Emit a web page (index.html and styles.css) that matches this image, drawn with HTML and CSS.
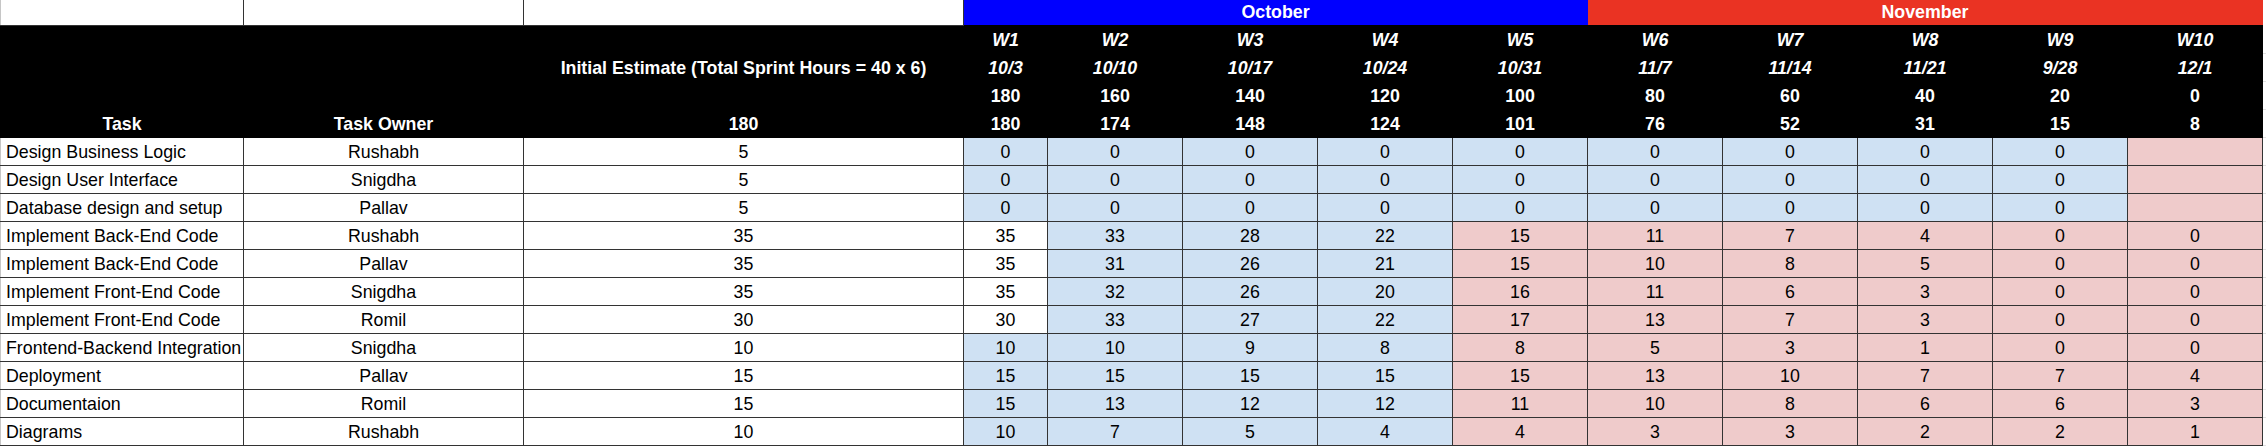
FILE: index.html
```html
<!DOCTYPE html>
<html lang="en">
<head>
<meta charset="utf-8">
<title>Sprint Burndown</title>
<link rel="stylesheet" href="styles.css">
</head>
<body>
<table class="sheet">
  <colgroup>
    <col class="c-task">
    <col class="c-owner">
    <col class="c-est">
    <col class="c-w1">
    <col class="c-w"><col class="c-w"><col class="c-w"><col class="c-w"><col class="c-w">
    <col class="c-w"><col class="c-w"><col class="c-w"><col class="c-w">
    <col class="c-pad">
  </colgroup>
  <tbody>
    <tr class="month-row">
      <td></td><td></td><td></td>
      <td colspan="5" class="month oct">October</td>
      <td colspan="5" class="month nov">November</td>
      <td class="pad"></td>
    </tr>
    <tr class="hdr">
      <td></td><td></td><td></td>
      <td class="it">W1</td><td class="it">W2</td><td class="it">W3</td><td class="it">W4</td><td class="it">W5</td>
      <td class="it">W6</td><td class="it">W7</td><td class="it">W8</td><td class="it">W9</td><td class="it">W10</td>
      <td class="pad"></td>
    </tr>
    <tr class="hdr">
      <td></td><td></td><td>Initial Estimate (Total Sprint Hours = 40 x 6)</td>
      <td class="it">10/3</td><td class="it">10/10</td><td class="it">10/17</td><td class="it">10/24</td><td class="it">10/31</td>
      <td class="it">11/7</td><td class="it">11/14</td><td class="it">11/21</td><td class="it">9/28</td><td class="it">12/1</td>
      <td class="pad"></td>
    </tr>
    <tr class="hdr">
      <td></td><td></td><td></td>
      <td>180</td><td>160</td><td>140</td><td>120</td><td>100</td>
      <td>80</td><td>60</td><td>40</td><td>20</td><td>0</td>
      <td class="pad"></td>
    </tr>
    <tr class="hdr last">
      <td>Task</td><td>Task Owner</td><td>180</td>
      <td>180</td><td>174</td><td>148</td><td>124</td><td>101</td>
      <td>76</td><td>52</td><td>31</td><td>15</td><td>8</td>
      <td class="pad"></td>
    </tr>

    <tr class="data">
      <td class="task">Design Business Logic</td><td>Rushabh</td><td>5</td>
      <td class="b">0</td><td class="b">0</td><td class="b">0</td><td class="b">0</td><td class="b">0</td>
      <td class="b">0</td><td class="b">0</td><td class="b">0</td><td class="b">0</td><td class="r"></td>
      <td class="pad"></td>
    </tr>
    <tr class="data">
      <td class="task">Design User Interface</td><td>Snigdha</td><td>5</td>
      <td class="b">0</td><td class="b">0</td><td class="b">0</td><td class="b">0</td><td class="b">0</td>
      <td class="b">0</td><td class="b">0</td><td class="b">0</td><td class="b">0</td><td class="r"></td>
      <td class="pad"></td>
    </tr>
    <tr class="data">
      <td class="task">Database design and setup</td><td>Pallav</td><td>5</td>
      <td class="b">0</td><td class="b">0</td><td class="b">0</td><td class="b">0</td><td class="b">0</td>
      <td class="b">0</td><td class="b">0</td><td class="b">0</td><td class="b">0</td><td class="r"></td>
      <td class="pad"></td>
    </tr>
    <tr class="data">
      <td class="task">Implement Back-End Code</td><td>Rushabh</td><td>35</td>
      <td>35</td><td class="b">33</td><td class="b">28</td><td class="b">22</td><td class="r">15</td>
      <td class="r">11</td><td class="r">7</td><td class="r">4</td><td class="r">0</td><td class="r">0</td>
      <td class="pad"></td>
    </tr>
    <tr class="data">
      <td class="task">Implement Back-End Code</td><td>Pallav</td><td>35</td>
      <td>35</td><td class="b">31</td><td class="b">26</td><td class="b">21</td><td class="r">15</td>
      <td class="r">10</td><td class="r">8</td><td class="r">5</td><td class="r">0</td><td class="r">0</td>
      <td class="pad"></td>
    </tr>
    <tr class="data">
      <td class="task">Implement Front-End Code</td><td>Snigdha</td><td>35</td>
      <td>35</td><td class="b">32</td><td class="b">26</td><td class="b">20</td><td class="r">16</td>
      <td class="r">11</td><td class="r">6</td><td class="r">3</td><td class="r">0</td><td class="r">0</td>
      <td class="pad"></td>
    </tr>
    <tr class="data">
      <td class="task">Implement Front-End Code</td><td>Romil</td><td>30</td>
      <td>30</td><td class="b">33</td><td class="b">27</td><td class="b">22</td><td class="r">17</td>
      <td class="r">13</td><td class="r">7</td><td class="r">3</td><td class="r">0</td><td class="r">0</td>
      <td class="pad"></td>
    </tr>
    <tr class="data">
      <td class="task">Frontend-Backend Integration</td><td>Snigdha</td><td>10</td>
      <td class="b">10</td><td class="b">10</td><td class="b">9</td><td class="b">8</td><td class="r">8</td>
      <td class="r">5</td><td class="r">3</td><td class="r">1</td><td class="r">0</td><td class="r">0</td>
      <td class="pad"></td>
    </tr>
    <tr class="data">
      <td class="task">Deployment</td><td>Pallav</td><td>15</td>
      <td class="b">15</td><td class="b">15</td><td class="b">15</td><td class="b">15</td><td class="r">15</td>
      <td class="r">13</td><td class="r">10</td><td class="r">7</td><td class="r">7</td><td class="r">4</td>
      <td class="pad"></td>
    </tr>
    <tr class="data">
      <td class="task">Documentaion</td><td>Romil</td><td>15</td>
      <td class="b">15</td><td class="b">13</td><td class="b">12</td><td class="b">12</td><td class="r">11</td>
      <td class="r">10</td><td class="r">8</td><td class="r">6</td><td class="r">6</td><td class="r">3</td>
      <td class="pad"></td>
    </tr>
    <tr class="data">
      <td class="task">Diagrams</td><td>Rushabh</td><td>10</td>
      <td class="b">10</td><td class="b">7</td><td class="b">5</td><td class="b">4</td><td class="r">4</td>
      <td class="r">3</td><td class="r">3</td><td class="r">2</td><td class="r">2</td><td class="r">1</td>
      <td class="pad"></td>
    </tr>
  </tbody>
</table>
</body>
</html>
```

FILE: styles.css
```css
html, body {
  margin: 0;
  padding: 0;
  background: #ffffff;
}

body {
  font-family: "Liberation Sans", Arial, sans-serif;
  font-size: 17.8px;
  color: #000000;
}

.sheet {
  border-collapse: collapse;
  table-layout: fixed;
  width: 2266px;
}

.c-task { width: 243px; }
.c-owner { width: 280px; }
.c-est { width: 440px; }
.c-w1 { width: 84px; }
.c-w { width: 135px; }
.c-pad { width: 4px; }

.sheet td {
  padding: 0 4px 3px;
  vertical-align: bottom;
  text-align: center;
  white-space: nowrap;
  line-height: 20px;
  border: 1px solid #333333;
}

.sheet tr > td:first-child {
  border-left: 1px solid #c6c6c6;
}

.month-row {
  height: 25px;
}

.month-row td {
  border-top: 0;
  background: #ffffff;
}

.month-row td.month {
  color: #ffffff;
  font-weight: bold;
  border-bottom-color: #000000;
}

.month.oct {
  background: #0000ff;
  border-left-color: #0000ff;
  border-right-color: #0000ff;
}

.month.nov {
  background: #ea3323;
  border-left-color: #ea3323;
  border-right-color: #ea3323;
}

.hdr {
  height: 28px;
}

.hdr td {
  background: #000000;
  color: #ffffff;
  font-weight: bold;
  border-color: #000000;
}

.sheet .hdr td:first-child {
  border-left-color: #000000;
}

.hdr td.it {
  font-style: italic;
}

.data {
  height: 28px;
}

.data td.task {
  text-align: left;
  padding-left: 5px;
  padding-right: 0;
  overflow: visible;
}

.data td.b {
  background: #cfe1f3;
}

.data td.r {
  background: #efcbcb;
}

.sheet td.pad {
  padding: 0;
  background: #ffffff;
  border-top: 1px solid #e1e1e1;
  border-bottom: 1px solid #e1e1e1;
  border-right: 0;
}

.month-row td.pad {
  border-top: 0;
  border-bottom-color: #ffffff;
}
```
